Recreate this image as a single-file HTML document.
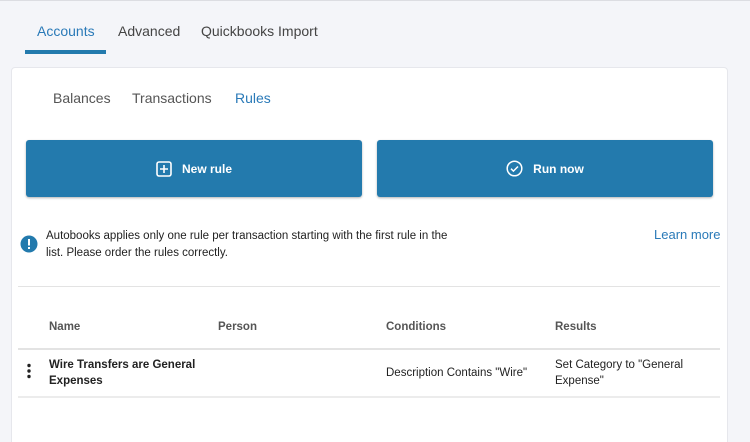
<!DOCTYPE html>
<html><head><style>
*{margin:0;padding:0;box-sizing:border-box}
html,body{width:750px;height:442px;overflow:hidden}
body{background:#f4f5f9;font-family:"Liberation Sans",Arial,sans-serif;position:relative}
.a{position:absolute;white-space:nowrap}
.tab{font-size:14px;color:#444;top:23px}
.card{position:absolute;left:11px;top:67px;width:717px;height:380px;background:#fff;border:1px solid #e6e7ec;border-radius:4px}
.sub{font-size:14px;color:#555;top:90px}
.btn{position:absolute;top:140px;height:57px;background:#237aad;border-radius:3px;box-shadow:0 1px 2px rgba(0,0,0,.3);color:#fff;font-weight:bold;font-size:12px;display:flex;align-items:center;justify-content:center;gap:10px}
.line{position:absolute;left:18px;width:702px;background:#e3e3e3}
.th{font-size:11.5px;color:#555;font-weight:bold;top:321px}
.td{font-size:11.5px;color:#222;line-height:16px}
</style></head><body>
<div class="a" style="left:0;top:0;width:750px;height:1px;background:#dcdde2"></div>
<div class="a tab" style="left:37px;color:#2a7ab8">Accounts</div>
<div class="a" style="left:25px;top:50px;width:81px;height:4px;background:#237aad"></div>
<div class="a tab" style="left:118px">Advanced</div>
<div class="a tab" style="left:201px">Quickbooks Import</div>
<div class="card"></div>
<div class="a sub" style="left:53px">Balances</div>
<div class="a sub" style="left:132px">Transactions</div>
<div class="a sub" style="left:235px;color:#2a7ab8">Rules</div>
<div class="btn" style="left:26px;width:336px"><svg width="16" height="16" viewBox="0 0 16 16"><rect x="1" y="1" width="14" height="14" rx="2" fill="none" stroke="#fff" stroke-width="1.6"/><path d="M8 4v8M4 8h8" stroke="#fff" stroke-width="1.6"/></svg><span>New rule</span></div>
<div class="btn" style="left:377px;width:336px"><svg width="17" height="17" viewBox="0 0 17 17"><circle cx="8.5" cy="8.5" r="7.3" fill="none" stroke="#fff" stroke-width="1.5"/><path d="M5 8.7l2.4 2.4 4.6-4.6" fill="none" stroke="#fff" stroke-width="1.5"/></svg><span>Run now</span></div>
<svg class="a" style="left:20px;top:235px" width="18" height="18" viewBox="0 0 18 18"><circle cx="9" cy="9" r="8.5" fill="#237aad"/><rect x="8" y="4" width="2" height="6.5" fill="#fff"/><rect x="8" y="12" width="2" height="2" fill="#fff"/></svg>
<div class="a" style="left:46px;top:228px;font-size:11.5px;color:#222;line-height:17px">Autobooks applies only one rule per transaction starting with the first rule in the<br>list. Please order the rules correctly.</div>
<div class="a" style="left:654px;top:227px;font-size:13px;color:#2a7ab8">Learn more</div>
<div class="line" style="top:286px;height:1px"></div>
<div class="a th" style="left:49px">Name</div>
<div class="a th" style="left:218px">Person</div>
<div class="a th" style="left:386px">Conditions</div>
<div class="a th" style="left:555px">Results</div>
<div class="line" style="top:348px;height:2px"></div>
<svg class="a" style="left:26px;top:363px" width="6" height="16" viewBox="0 0 6 16"><circle cx="3" cy="2.5" r="1.7" fill="#222"/><circle cx="3" cy="8" r="1.7" fill="#222"/><circle cx="3" cy="13.5" r="1.7" fill="#222"/></svg>
<div class="a td" style="left:49px;top:357px;font-weight:bold">Wire Transfers are General<br>Expenses</div>
<div class="a td" style="left:386px;top:365px">Description Contains "Wire"</div>
<div class="a td" style="left:555px;top:357px">Set Category to "General<br>Expense"</div>
<div class="line" style="top:396px;height:2px;background:#ececec"></div>
</body></html>
